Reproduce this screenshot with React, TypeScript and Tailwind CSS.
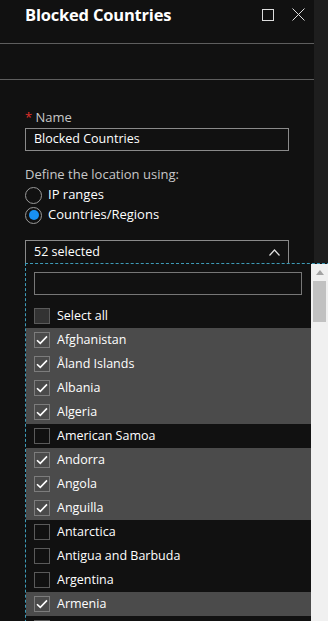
import React from "react";

const countries: { name: string; checked: boolean }[] = [
  { name: "Afghanistan", checked: true },
  { name: "Åland Islands", checked: true },
  { name: "Albania", checked: true },
  { name: "Algeria", checked: true },
  { name: "American Samoa", checked: false },
  { name: "Andorra", checked: true },
  { name: "Angola", checked: true },
  { name: "Anguilla", checked: true },
  { name: "Antarctica", checked: false },
  { name: "Antigua and Barbuda", checked: false },
  { name: "Argentina", checked: false },
  { name: "Armenia", checked: true },
  { name: "", checked: false },
];

const Check = () => (
  <svg width="12" height="10" viewBox="0 0 12 10" fill="none">
    <path d="M1 5.2 L4.3 8.4 L11 1.4" stroke="#ffffff" strokeWidth="1.6" />
  </svg>
);

const Row = ({ name, checked }: { name: string; checked: boolean }) => {
  return (
    <div className={`flex h-6 items-center gap-[7px] pl-2 ${checked ? "bg-[#4b4b4b]" : "bg-[#111111]"}`}>
      <div className={`flex h-4 w-4 items-center justify-center border ${checked ? "border-[#7c7c7c]" : "border-[#5a5a5a]"}`}>
        {checked && <Check />}
      </div>
      {name && <span className="text-[12.5px] text-white">{name}</span>}
    </div>
  );
};

const App = () => {
  return (
    <div className="flex h-[621px] w-[328px] overflow-hidden bg-[#111111] font-['Open_Sans',sans-serif]">
      <div className="w-[314px] shrink-0">
        <div className="flex h-[43px] items-start justify-between pl-[25px] pr-[9px] pt-[3px]">
          <h1 className="text-[16.5px] font-bold tracking-[-0.2px] text-white">Blocked Countries</h1>
          <div className="flex items-center gap-[18px] pt-[5px]">
            <div className="h-3 w-3 border border-[#dddddd]" />
            <svg width="13" height="13" viewBox="0 0 13 13">
              <path d="M0.5 0.5 L12.5 12.5 M12.5 0.5 L0.5 12.5" stroke="#dddddd" strokeWidth="1" />
            </svg>
          </div>
        </div>
        <div className="h-px bg-[#5e5e5e]" />
        <div className="h-[35px]" />
        <div className="h-px bg-[#5e5e5e]" />

        <div className="px-[25px] pt-[28px]">
          <div className="text-[13px] leading-[18px] text-[#c8c8c8]">
            <span className="text-[#e0302a]">*</span> Name
          </div>
          <div className="mt-[2px] flex h-[23px] w-[264px] items-center border border-[#8a8a8a] px-2 text-[12.5px] text-white">
            Blocked Countries
          </div>

          <div className="mt-[14px] text-[13px] leading-[18px] text-[#c8c8c8]">Define the location using:</div>
          <div className="mt-[2px] flex h-5 items-center gap-[6px]">
            <div className="h-[17px] w-[17px] rounded-full border border-[#9a9a9a]" />
            <span className="text-[13px] text-white">IP ranges</span>
          </div>
          <div className="flex h-5 items-center gap-[6px]">
            <div className="flex h-[17px] w-[17px] items-center justify-center rounded-full border border-[#9a9a9a]">
              <div className="h-[10px] w-[10px] rounded-full bg-[#1890f1]" />
            </div>
            <span className="text-[13px] text-white">Countries/Regions</span>
          </div>

          <div className="relative mt-[15px]">
            <div className="flex h-[24px] w-[264px] items-center justify-between border border-[#8a8a8a] pl-2 pr-[8px] text-[12.5px] text-white">
              <span>52 selected</span>
              <svg width="11" height="7" viewBox="0 0 11 7">
                <path d="M0.5 6.5 L5.5 1 L10.5 6.5" stroke="#e0e0e0" strokeWidth="1.2" fill="none" />
              </svg>
            </div>

            <div className="absolute left-0 top-[23px] z-10 flex h-[400px] w-[310px] border border-dashed border-[#3e9bb8] bg-[#111111]">
              <div className="w-[285px] shrink-0">
                <div className="px-2 pt-[8px]">
                  <div className="h-[23px] w-[268px] border border-[#777777]" />
                </div>
                <div className="mt-[9px] flex h-6 items-center gap-[7px] pl-2">
                  <div className="h-4 w-4 border border-[#5a5a5a] bg-[#333333]" />
                  <span className="text-[12.5px] text-white">Select all</span>
                </div>
                {countries.map((c, i) => (
                  <Row key={i} name={c.name} checked={c.checked} />
                ))}
              </div>
              <div className="flex w-[17px] flex-col items-center bg-[#f0f0f0] pt-[6px]">
                <svg width="8" height="5" viewBox="0 0 8 5">
                  <path d="M0 5 L4 0 L8 5 Z" fill="#a3a3a3" />
                </svg>
                <div className="mt-[6px] h-[41px] w-[13px] bg-[#c1c1c1]" />
              </div>
            </div>
          </div>
        </div>
      </div>
      <div className="flex-1 bg-[#1e1e1e]" />
    </div>
  );
};

export default App;
